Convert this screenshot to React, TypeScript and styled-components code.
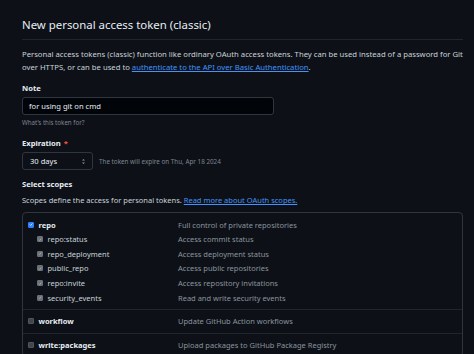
import React from "react";
import styled, { createGlobalStyle } from "styled-components";

const Global = createGlobalStyle`
  html, body { margin: 0; padding: 0; background: #0d1117; }
  body { font-family: "Noto Sans", "Open Sans", sans-serif; color: #e6edf3; }
  * { box-sizing: border-box; }
`;

const Page = styled.div`
  width: 474px;
  height: 354px;
  overflow: hidden;
  padding: 15px 11px 0 22px;
  background: #0d1117;
`;

const Header = styled.div`
  padding-bottom: 4px;
  border-bottom: 1px solid #21262d;
`;

const Title = styled.h1`
  margin: 0;
  font-size: 11.4px;
  line-height: 20px;
  font-weight: 400;
  color: #e6edf3;
`;

const Para = styled.p`
  margin: 8px 0 0;
  font-size: 7.7px;
  line-height: 12.7px;
  white-space: nowrap;
  color: #c9d1d9;
`;

const Link = styled.a`
  color: #4493f8;
  text-decoration: underline;
  text-underline-offset: 1px;
`;

const Label = styled.div<{ $mt: number }>`
  margin-top: ${(p) => p.$mt}px;
  font-size: 7.6px;
  line-height: 12px;
  font-weight: 700;
  color: #e6edf3;
`;

const Req = styled.span`
  color: #f85149;
  margin-left: 3px;
`;

const Input = styled.div`
  margin-top: 3px;
  width: 252px;
  height: 18px;
  border: 1px solid #30363d;
  border-radius: 3px;
  background: #010409;
  padding-left: 6px;
  display: flex;
  align-items: center;
  font-size: 7.6px;
  color: #e6edf3;
`;

const Hint = styled.div`
  margin-top: 2.7px;
  font-size: 6.2px;
  line-height: 10px;
  color: #7d8590;
`;

const ExpRow = styled.div`
  margin-top: 3px;
  display: flex;
  align-items: center;
  gap: 6px;
`;

const Select = styled.div`
  width: 71px;
  height: 18px;
  border: 1px solid #30363d;
  border-radius: 3px;
  background: #0d1117;
  padding: 0 6px 0 7px;
  display: flex;
  align-items: center;
  justify-content: space-between;
  font-size: 7.6px;
  color: #e6edf3;
`;

const Arrow = styled.svg`
  width: 5px;
  height: 7px;
`;

const ExpNote = styled.span`
  font-size: 6.3px;
  color: #7d8590;
`;

const Sub = styled.div`
  margin-top: 4px;
  font-size: 7.5px;
  line-height: 12px;
  color: #c9d1d9;
`;

const Table = styled.div`
  margin-top: 6px;
  width: 441px;
  border: 1px solid #30363d;
  border-radius: 4px;
`;

const Group = styled.div`
  padding: 4px 0;
  & + & { border-top: 1px solid #21262d; }
`;

const Row = styled.div<{ $child?: boolean }>`
  display: grid;
  grid-template-columns: ${(p) => (p.$child ? "141px" : "150px")} 1fr;
  padding-left: ${(p) => (p.$child ? "14px" : "5px")};
  height: 14.6px;
  align-items: center;
  font-size: 7.5px;
`;

const Name = styled.div<{ $bold?: boolean }>`
  display: flex;
  align-items: center;
  gap: 4.5px;
  font-weight: ${(p) => (p.$bold ? 700 : 400)};
  color: ${(p) => (p.$bold ? "#e6edf3" : "#c9d1d9")};
`;

const Desc = styled.div`
  color: #8b949e;
`;

const Box = styled.span<{ $state: "on" | "dis" | "off" }>`
  width: 6px;
  height: 6px;
  border-radius: 1px;
  flex: none;
  display: inline-flex;
  align-items: center;
  justify-content: center;
  background: ${(p) => (p.$state === "on" ? "#2f81f7" : p.$state === "dis" ? "#6a7077" : "#41464d")};
  border: 1px solid ${(p) => (p.$state === "on" ? "#2f81f7" : p.$state === "dis" ? "#6a7077" : "#50565e")};
`;

const Check = ({ color }: { color: string }) => (
  <svg width="5" height="5" viewBox="0 0 10 10">
    <path d="M2 5.2 L4.2 7.4 L8.2 2.6" fill="none" stroke={color} strokeWidth="1.8" />
  </svg>
);

const CheckBox = ({ state }: { state: "on" | "dis" | "off" }) => (
  <Box $state={state}>
    {state === "on" && <Check color="#ffffff" />}
    {state === "dis" && <Check color="#b4babf" />}
  </Box>
);

const repoChildren = [
  ["repo:status", "Access commit status"],
  ["repo_deployment", "Access deployment status"],
  ["public_repo", "Access public repositories"],
  ["repo:invite", "Access repository invitations"],
  ["security_events", "Read and write security events"],
];

export default function App() {
  return (
    <>
      <Global />
      <Page>
        <Header>
          <Title>New personal access token (classic)</Title>
        </Header>
        <Para>
          Personal access tokens (classic) function like ordinary OAuth access tokens. They can be used instead of a password for Git
          <br />
          over HTTPS, or can be used to <Link>authenticate to the API over Basic Authentication</Link>.
        </Para>
        <Label $mt={9}>Note</Label>
        <Input>for using git on cmd</Input>
        <Hint>What’s this token for?</Hint>
        <Label $mt={9.3}>
          Expiration<Req>*</Req>
        </Label>
        <ExpRow>
          <Select>
            <span>30 days</span>
            <Arrow viewBox="0 0 10 14">
              <path d="M2 5 L5 2 L8 5 Z M2 9 L5 12 L8 9 Z" fill="#8b949e" />
            </Arrow>
          </Select>
          <ExpNote>The token will expire on Thu, Apr 18 2024</ExpNote>
        </ExpRow>
        <Label $mt={8}>Select scopes</Label>
        <Sub>
          Scopes define the access for personal tokens. <Link>Read more about OAuth scopes.</Link>
        </Sub>
        <Table>
          <Group>
            <Row>
              <Name $bold>
                <CheckBox state="on" />
                repo
              </Name>
              <Desc>Full control of private repositories</Desc>
            </Row>
            {repoChildren.map(([n, d]) => (
              <Row $child key={n}>
                <Name>
                  <CheckBox state="dis" />
                  {n}
                </Name>
                <Desc>{d}</Desc>
              </Row>
            ))}
          </Group>
          <Group>
            <Row>
              <Name $bold>
                <CheckBox state="off" />
                workflow
              </Name>
              <Desc>Update GitHub Action workflows</Desc>
            </Row>
          </Group>
          <Group>
            <Row>
              <Name $bold>
                <CheckBox state="off" />
                write:packages
              </Name>
              <Desc>Upload packages to GitHub Package Registry</Desc>
            </Row>
          </Group>
        </Table>
      </Page>
    </>
  );
}
